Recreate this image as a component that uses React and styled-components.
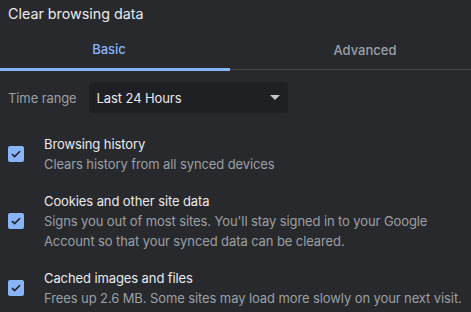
import React from 'react';
import styled, { createGlobalStyle } from 'styled-components';

const GlobalStyle = createGlobalStyle`
  body {
    margin: 0;
    background: #28292c;
    font-family: Inter, "Liberation Sans", sans-serif;
    -webkit-font-smoothing: antialiased;
  }
`;

const Dialog = styled.div`
  width: 471px;
  height: 312px;
  overflow: hidden;
  background: #28292c;
  color: #e8eaed;
`;

const Title = styled.h1`
  margin: 0;
  padding: 0 8px;
  height: 28px;
  line-height: 28px;
  font-size: 14.3px;
  font-weight: 400;
  color: #e8eaed;
`;

const TabBar = styled.div`
  display: grid;
  grid-template-columns: 230px 1fr;
  height: 40px;
  border-bottom: 1px solid #4a4c50;
  margin-top: 1px;
`;

const Tab = styled.div`
  display: flex;
  align-items: center;
  justify-content: center;
  font-size: 13px;
  font-weight: 500;
  color: ${(p) => (p.active ? '#8ab4f8' : '#9aa0a6')};
  border-bottom: ${(p) => (p.active ? '3px solid #8ab4f8' : '0')};
  margin-bottom: ${(p) => (p.active ? '-2px' : '0')};
  padding: ${(p) => (p.active ? '0 12px 0 0' : '1px 0 0 29px')};
`;

const Content = styled.div`
  padding: 0 0 0 8px;
  font-size: 13px;
  letter-spacing: -0.1px;
`;

const RangeRow = styled.div`
  display: flex;
  align-items: center;
  margin-top: 12px;
  gap: 12px;
`;

const RangeLabel = styled.span`
  color: #9aa0a6;
`;

const Select = styled.div`
  width: 199px;
  height: 31px;
  box-sizing: border-box;
  background: #1f2023;
  border-radius: 4px;
  display: flex;
  align-items: center;
  justify-content: space-between;
  padding: 0 8px;
  color: #e8eaed;
`;

const Caret = styled.span`
  width: 0;
  height: 0;
  border-left: 5px solid transparent;
  border-right: 5px solid transparent;
  border-top: 5px solid #c4c7c5;
`;

const List = styled.div`
  margin-top: 21px;
  display: flex;
  flex-direction: column;
  gap: 17px;
`;

const Row = styled.div`
  display: flex;
  align-items: center;
  gap: 20px;
`;

const Box = styled.span`
  flex: none;
  width: 16px;
  height: 16px;
  border-radius: 2px;
  background: #8ab4f8;
  display: flex;
  align-items: center;
  justify-content: center;
`;

const Text = styled.div`
  display: flex;
  flex-direction: column;
  line-height: 20px;
  white-space: nowrap;
`;

const Label = styled.span`
  color: #e8eaed;
`;

const Sub = styled.span`
  color: #9aa0a6;
`;

const Check = () => (
  <svg width="10" height="8" viewBox="0 0 10 8">
    <path d="M1 4.2 L3.6 6.6 L9 1.2" fill="none" stroke="#202124" strokeWidth="1.6" />
  </svg>
);

const items = [
  { label: 'Browsing history', sub: ['Clears history from all synced devices'] },
  {
    label: 'Cookies and other site data',
    sub: [
      "Signs you out of most sites. You'll stay signed in to your Google",
      'Account so that your synced data can be cleared.',
    ],
  },
  {
    label: 'Cached images and files',
    sub: ['Frees up 2.6 MB. Some sites may load more slowly on your next visit.'],
  },
];

const App = () => (
  <Dialog>
    <GlobalStyle />
    <Title>Clear browsing data</Title>
    <TabBar>
      <Tab active>Basic</Tab>
      <Tab>Advanced</Tab>
    </TabBar>
    <Content>
      <RangeRow>
        <RangeLabel>Time range</RangeLabel>
        <Select>
          Last 24 Hours
          <Caret />
        </Select>
      </RangeRow>
      <List>
        {items.map((item) => (
          <Row key={item.label}>
            <Box>
              <Check />
            </Box>
            <Text>
              <Label>{item.label}</Label>
              {item.sub.map((line) => (
                <Sub key={line}>{line}</Sub>
              ))}
            </Text>
          </Row>
        ))}
      </List>
    </Content>
  </Dialog>
);

export default App;
